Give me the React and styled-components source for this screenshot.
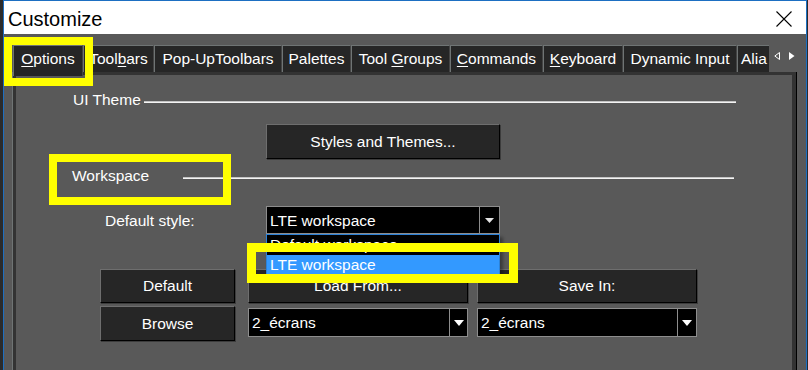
import React from "react";
import styled, { createGlobalStyle } from "styled-components";

const GlobalStyle = createGlobalStyle`
  html, body {
    margin: 0;
    padding: 0;
    background: #2b2b2b;
  }
  body {
    font-family: "Liberation Sans", Arial, sans-serif;
  }
  #root {
    width: 808px;
    height: 370px;
    overflow: hidden;
  }
`;

const Window = styled.div`
  position: relative;
  margin-left: 3px;
  width: 804px;
  height: 370px;
  box-sizing: border-box;
  border: 1px solid #1d6fc2;
  border-bottom: none;
  background: #595959;
  display: flex;
  flex-direction: column;
  overflow: hidden;
`;

const TitleBar = styled.div`
  height: 33px;
  flex: none;
  background: #fff;
  display: flex;
  align-items: center;
  justify-content: space-between;
  padding: 3px 14px 0 4px;
  box-sizing: border-box;
`;

const Title = styled.span`
  font-size: 20px;
  color: #000;
  line-height: 24px;
`;

const TabStrip = styled.div`
  height: 38px;
  flex: none;
  box-sizing: border-box;
  padding: 11px 0 0 9px;
  display: flex;
  align-items: flex-start;
`;

const TabList = styled.div`
  position: relative;
  z-index: 1;
  width: 756px;
  height: 31px;
  display: flex;
  align-items: flex-start;
  overflow: hidden;
  flex: none;
`;

const Tab = styled.div`
  flex: none;
  width: ${(p) => p.$w}px;
  height: ${(p) => (p.$active ? 31 : 27)}px;
  box-sizing: border-box;
  background: #262626;
  border-top: 1px solid #6f7474;
  border-left: 1px solid #6f7474;
  border-right: 1px solid #444;
  color: #fff;
  font-size: 15.5px;
  line-height: 26px;
  text-align: ${(p) => (p.$clip ? "left" : "center")};
  padding-left: ${(p) => (p.$clip ? 3 : 0)}px;
  white-space: nowrap;

  u {
    text-decoration-thickness: 1px;
    text-underline-offset: 2px;
  }
`;

const ScrollArrows = styled.div`
  display: flex;
  gap: 9px;
  margin: 7px 0 0 5px;
`;

const Panel = styled.div`
  flex: 1;
  margin-left: 8px;
  width: 785px;
  box-sizing: border-box;
  border-left: 1px solid #6f7474;
  border-right: 1px solid #000;
  background: #595959;
  box-shadow: inset 3px 3px 0 #333, inset -4px 0 0 #333;
  padding-top: 18px;
  display: flex;
  flex-direction: column;
  color: #fff;
  font-size: 15.5px;
`;

const GroupHeader = styled.div`
  display: flex;
  align-items: flex-start;
  height: 20px;
  margin-left: ${(p) => p.$x}px;
  width: ${(p) => p.$w}px;
  margin-top: ${(p) => p.$mt || 0}px;
`;

const GroupLabel = styled.span`
  flex: none;
  min-width: ${(p) => p.$min || 0}px;
  line-height: 20px;
  padding-right: 3px;
`;

const GroupLine = styled.div`
  flex: 1;
  margin-top: 11px;
  height: 0;
  border-top: 1px solid #c4c4c4;
  border-bottom: 1px solid #f4f4f4;
`;

const Button = styled.div`
  width: ${(p) => p.$w}px;
  height: ${(p) => p.$h}px;
  box-sizing: border-box;
  background: #262626;
  border: 1px solid;
  border-color: #6e6e6e #000 #000 #6e6e6e;
  box-shadow: 1px 1px 0 #3c3c3c;
  color: #fff;
  font-size: 15.5px;
  display: flex;
  align-items: center;
  justify-content: center;
  white-space: nowrap;
`;

const StylesRow = styled.div`
  margin: 14px 0 0 253px;
`;

const FieldRow = styled.div`
  display: flex;
  align-items: center;
  margin: 20px 0 0 92px;
  height: 28px;
`;

const FieldLabel = styled.span`
  width: 161px;
  line-height: 20px;
  padding-top: 2px;
`;

const ComboWrap = styled.div`
  position: relative;
  display: flex;
  width: ${(p) => p.$w}px;
  height: ${(p) => p.$h}px;
  align-self: ${(p) => (p.$top ? "start" : "auto")};
  margin-top: ${(p) => p.$mt || 0}px;
`;

const ComboField = styled.div`
  flex: 1;
  min-width: 0;
  box-sizing: border-box;
  background: #000;
  border: 1px solid #8d8d8d;
  color: #fff;
  font-size: 15.5px;
  padding: 1px 0 0 3px;
  display: flex;
  align-items: center;
  white-space: nowrap;
  overflow: hidden;
`;

const ComboArrow = styled.div`
  flex: none;
  width: ${(p) => p.$w}px;
  box-sizing: border-box;
  background: #000;
  border: 1px solid #8d8d8d;
  border-left: none;
  display: flex;
  align-items: center;
  justify-content: center;
`;

const DropList = styled.div`
  position: absolute;
  left: 0;
  top: 100%;
  width: 234px;
  box-sizing: border-box;
  border: 1px solid #2c82d8;
  background: #000;
  box-shadow: 3px 3px 3px rgba(0, 0, 0, 0.35);
  z-index: 2;
`;

const DropItem = styled.div`
  height: 20px;
  line-height: 20px;
  padding-left: 3px;
  color: #fff;
  font-size: 15.5px;
  background: ${(p) => (p.$selected ? "#3399ff" : "#000")};
  white-space: nowrap;
`;

const ButtonGrid = styled.div`
  display: grid;
  grid-template-columns: 148px 229px 220px;
  grid-template-rows: 34px 35px;
  row-gap: 3px;
  margin: 35px 0 0 87px;
  justify-items: start;
`;

const Highlight = styled.div`
  position: absolute;
  z-index: 5;
  left: ${(p) => p.$x}px;
  top: ${(p) => p.$y}px;
  width: ${(p) => p.$w}px;
  height: ${(p) => p.$h}px;
  box-sizing: border-box;
  border: ${(p) => p.$b || 8}px solid #ffff00;
  pointer-events: none;
`;

const Triangle = ({ w = 9, h = 5, color = "#e4e4e4" }) => (
  <svg width={w} height={h} viewBox={`0 0 ${w} ${h}`}>
    <polygon points={`0,0 ${w},0 ${w / 2},${h}`} fill={color} />
  </svg>
);

function Combo({ w, h, arrowW, text, tri, children, top, mt }) {
  return (
    <ComboWrap $w={w} $h={h} $top={top} $mt={mt}>
      <ComboField>{text}</ComboField>
      <ComboArrow $w={arrowW}>
        <Triangle {...tri} />
      </ComboArrow>
      {children}
    </ComboWrap>
  );
}

const tabs = [
  { w: 70, label: <><u>O</u>ptions</>, active: true },
  { w: 71, label: <>Tool<u>b</u>ars</> },
  { w: 128, label: "Pop-UpToolbars" },
  { w: 69, label: "Palettes" },
  { w: 99, label: <>Tool <u>G</u>roups</> },
  { w: 93, label: <><u>C</u>ommands</> },
  { w: 80, label: <><u>K</u>eyboard</> },
  { w: 114, label: "Dynamic Input" },
  { w: 45, label: "Alia", clip: true },
];

export default function App() {
  return (
    <>
      <GlobalStyle />
      <Window>
        <TitleBar>
          <Title>Customize</Title>
          <svg width="16" height="16" viewBox="0 0 16 16">
            <path d="M0.5 0.5 L15.5 15.5 M15.5 0.5 L0.5 15.5" stroke="#000" strokeWidth="1.1" />
          </svg>
        </TitleBar>

        <TabStrip>
          <TabList>
            {tabs.map((t, i) => (
              <Tab key={i} $w={t.w} $active={t.active} $clip={t.clip}>
                {t.label}
              </Tab>
            ))}
          </TabList>
          <ScrollArrows>
            <svg width="6" height="8" viewBox="0 0 6 8">
              <polygon points="5.5,0.5 5.5,7.5 0.8,4" fill="none" stroke="#fff" strokeWidth="1" />
            </svg>
            <svg width="6" height="8" viewBox="0 0 6 8">
              <polygon points="0,0 0,8 5.5,4" fill="#fff" />
            </svg>
          </ScrollArrows>
        </TabStrip>

        <Panel>
          <GroupHeader $x={60} $w={663}>
            <GroupLabel>UI Theme</GroupLabel>
            <GroupLine />
          </GroupHeader>

          <StylesRow>
            <Button $w={234} $h={35}>Styles and Themes...</Button>
          </StylesRow>

          <GroupHeader $x={59} $w={662} $mt={7}>
            <GroupLabel $min={108}>Workspace</GroupLabel>
            <GroupLine />
          </GroupHeader>

          <FieldRow>
            <FieldLabel>Default style:</FieldLabel>
            <Combo w={234} h={28} arrowW={20} text="LTE workspace">
              <DropList>
                <DropItem>Default workspace</DropItem>
                <DropItem $selected>LTE workspace</DropItem>
              </DropList>
            </Combo>
          </FieldRow>

          <ButtonGrid>
            <Button $w={135} $h={34}>Default</Button>
            <Button $w={220} $h={34}>Load From...</Button>
            <Button $w={220} $h={34}>Save In:</Button>
            <Button $w={135} $h={35}>Browse</Button>
            <Combo w={220} h={29} arrowW={18} text="2_écrans" top mt={2} tri={{ w: 10, h: 6, color: "#fff" }} />
            <Combo w={220} h={29} arrowW={19} text="2_écrans" top mt={2} tri={{ w: 10, h: 6, color: "#fff" }} />
          </ButtonGrid>
        </Panel>

        <Highlight $x={0} $y={36} $w={89} $h={49} />
        <Highlight $x={45} $y={153} $w={182} $h={51} />
        <Highlight $x={243} $y={242} $w={271} $h={40} $b={9} />
      </Window>
    </>
  );
}
